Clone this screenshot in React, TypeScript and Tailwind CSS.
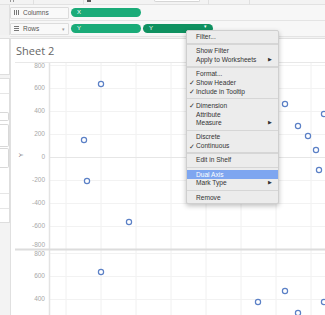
import React from "react";

const font = { fontFamily: '"Liberation Sans", Arial, sans-serif' };

type Item = { label: string; check?: boolean; arrow?: boolean; active?: boolean } | "sep";

const items: Item[] = [
  { label: "Filter..." },
  "sep",
  { label: "Show Filter" },
  { label: "Apply to Worksheets", arrow: true },
  "sep",
  { label: "Format..." },
  { label: "Show Header", check: true },
  { label: "Include in Tooltip", check: true },
  "sep",
  { label: "Dimension", check: true },
  { label: "Attribute" },
  { label: "Measure", arrow: true },
  "sep",
  { label: "Discrete" },
  { label: "Continuous", check: true },
  "sep",
  { label: "Edit in Shelf" },
  "sep",
  { label: "Dual Axis", active: true },
  { label: "Mark Type", arrow: true },
  "sep",
  { label: "Remove" },
];

const upperLabels = [
  { t: "800", y: 66 },
  { t: "600", y: 88 },
  { t: "400", y: 111 },
  { t: "200", y: 134 },
  { t: "0", y: 157 },
  { t: "-200", y: 180 },
  { t: "-400", y: 203 },
  { t: "-600", y: 226 },
  { t: "-800", y: 245 },
];
const lowerLabels = [
  { t: "800", y: 254 },
  { t: "600", y: 276 },
  { t: "400", y: 299 },
];
const upperPts = [
  [100, 84], [83, 140], [86, 181], [128, 222], [284, 104], [323, 114],
  [297, 126], [307, 136], [315, 150], [318, 170],
];
const lowerPts = [[100, 272], [257, 302], [284, 291], [297, 313], [323, 302]];

function Chart() {
  // page origin of svg: x=14, y=63
  const ox = 14;
  const oy = 63;
  const vx = [65, 100, 135, 170, 205, 240, 275, 310];
  const upperGrid = [65, 88, 111, 134, 157, 180, 203, 226, 249];
  const lowerGrid = [253, 276, 299];
  return (
    <svg width={311} height={252} className="block" style={font}>
      {vx.map((x) => (
        <line key={x} x1={x - ox} x2={x - ox} y1={0} y2={252} stroke="#f0f0f0" strokeWidth={1} />
      ))}
      {upperGrid.map((y) => (
        <line key={"u" + y} x1={48 - ox} x2={311} y1={y - oy + 0.5} y2={y - oy + 0.5} stroke={y === 157 ? "#e6e6e6" : "#f2f2f2"} strokeWidth={1} />
      ))}
      {lowerGrid.map((y) => (
        <line key={"l" + y} x1={48 - ox} x2={311} y1={y - oy + 0.5} y2={y - oy + 0.5} stroke="#f2f2f2" strokeWidth={1} />
      ))}
      <line x1={48 - ox + 0.5} x2={48 - ox + 0.5} y1={0} y2={252} stroke="#e3e3e3" strokeWidth={1.5} />
      <line x1={0} x2={311} y1={249.5 - oy} y2={249.5 - oy} stroke="#dcdcdc" strokeWidth={2} />
      {[...upperLabels, ...lowerLabels].map((l) => (
        <text key={l.t + l.y} x={44 - ox} y={l.y - oy + 2.2} textAnchor="end" fontSize={6.5} fill="#a8a8a8">
          {l.t}
        </text>
      ))}
      <text x={0} y={0} fontSize={6} fill="#666" transform={`translate(${22 - ox},${155 - oy}) rotate(-90)`} textAnchor="middle">
        Y
      </text>
      {[...upperPts, ...lowerPts].map(([x, y], i) => (
        <circle key={i} cx={x - ox} cy={y - oy} r={2.6} fill="white" stroke="#5b80c6" strokeWidth={1.2} />
      ))}
    </svg>
  );
}

function Pill({ label, dark, arrow }: { label: string; dark?: boolean; arrow?: boolean }) {
  return (
    <div
      className={`relative flex h-[9px] w-[70px] items-center rounded-full pl-[6px] text-[6px] text-white ${dark ? "bg-[#0f9160]" : "bg-[#1aab78]"}`}
    >
      {label}
      {arrow && <span className="absolute right-[6px] top-[0px] text-[5px] leading-[5px]">▾</span>}
    </div>
  );
}

export default function App() {
  return (
    <div className="relative flex h-[315px] w-[325px] flex-col overflow-hidden bg-[#f3f3f3]" style={font}>
      {/* toolbar strip */}
      <div className="relative h-[5px] shrink-0 border-b border-[#e2e2e2] bg-[#f3f3f3]">
        <div className="absolute left-[10px] top-0 h-[2px] w-[4px] border-x border-[#999]" />
        <div className="absolute left-[33px] top-0 h-[5px] w-px bg-[#e0e0e0]" />
        <div className="absolute left-[83px] top-0 h-[5px] w-px bg-[#e0e0e0]" />
        <div className="absolute left-[87px] top-0 h-[2px] w-[4px] bg-[#555]" />
        <div className="absolute left-[154px] top-0 h-[2px] w-[46px] rounded-b-[2px] border-x border-b border-[#d6d6d6] bg-white" />
        <div className="absolute left-[208px] top-0 h-[5px] w-px bg-[#e0e0e0]" />
        <div className="absolute left-[249px] top-0 h-[5px] w-px bg-[#e0e0e0]" />
      </div>

      <div className="flex min-h-0 flex-1">
        {/* left sidebar */}
        <div className="flex w-[10px] shrink-0 flex-col">
          <div className="h-[30px] border-r border-[#e0e0e0] bg-[#f1f1f1]" />
          <div className="mt-[3px] h-[37px] border-y border-r border-[#dedede] bg-white" />
          <div className="mt-[3px] flex h-[145px] flex-col border-y border-r border-[#dedede] bg-white">
            <div className="h-[15px] border-b border-[#e6e6e6]" />
            <div className="mt-[18px] h-[9px] w-[9px] rounded-r-[2px] border-y border-r border-[#d8d8d8]" />
            <div className="mt-[3px] h-[23px] w-[9px] rounded-r-[2px] border-y border-r border-[#d8d8d8]" />
            <div className="mt-[1px] h-[20px] w-[9px] rounded-r-[2px] border-y border-r border-[#d8d8d8]" />
            <div className="mt-[25px] h-px bg-[#e6e6e6]" />
            <div className="mt-[14px] h-px bg-[#e6e6e6]" />
          </div>
        </div>

        {/* main */}
        <div className="flex min-w-0 flex-1 flex-col">
          {/* Columns shelf */}
          <div className="flex h-[16px] shrink-0 items-center border-b border-[#e4e4e4] bg-[#f7f7f7]">
            <div className="flex h-[12px] w-[59px] items-center gap-[4px] rounded-[1px] border border-[#dcdcdc] bg-[#f9f9f9] pl-[3px] text-[6.5px] text-[#555]">
              <span className="flex gap-[1px]">
                <span className="h-[5px] w-px bg-[#777]" />
                <span className="h-[5px] w-px bg-[#777]" />
                <span className="h-[5px] w-px bg-[#777]" />
              </span>
              Columns
            </div>
            <div className="ml-[2px]">
              <Pill label="X" />
            </div>
          </div>
          {/* Rows shelf */}
          <div className="flex h-[16px] shrink-0 items-center border-b border-[#e4e4e4] bg-[#f7f7f7]">
            <div className="relative flex h-[12px] w-[59px] items-center gap-[4px] rounded-[1px] border border-[#dcdcdc] bg-[#f9f9f9] pl-[3px] text-[6.5px] text-[#555]">
              <span className="flex flex-col gap-[1px]">
                <span className="h-px w-[5px] bg-[#777]" />
                <span className="h-px w-[5px] bg-[#777]" />
                <span className="h-px w-[5px] bg-[#777]" />
              </span>
              Rows
              <span className="absolute right-[3px] top-[2px] text-[5px] text-[#999]">▾</span>
            </div>
            <div className="ml-[2px] flex gap-[2px]">
              <Pill label="Y" />
              <Pill label="Y" dark arrow />
            </div>
          </div>

          {/* sheet card */}
          <div className="mt-[1px] flex min-h-0 flex-1 flex-col border-l border-t border-[#e0e0e0] bg-white pl-[4px]">
            <div className="flex h-[24px] shrink-0 items-center border-b border-[#e8e8e8] pl-[1px] pt-[1px] text-[11px] text-[#666]" style={{ fontFamily: '"Open Sans", "Liberation Sans", sans-serif' }}>
              Sheet 2
            </div>
            <Chart />
          </div>
        </div>
      </div>

      {/* context menu */}
      <div className="absolute left-[186px] top-[30px] w-[93px] rounded-[2px] border border-[#cfcfcf] bg-[#ececec] py-[1.5px] text-[6.6px] text-[#333] shadow-[0_2px_5px_rgba(0,0,0,0.25)]">
        {items.map((it, i) =>
          it === "sep" ? (
            <div key={i} className="flex h-[5.6px] items-center">
              <div className="h-[1.5px] w-full bg-[#d6d6d6]" />
            </div>
          ) : (
            <div
              key={i}
              className={`relative flex h-[8.7px] items-center pl-[9px] ${it.active ? "bg-[#7ea6f0] text-white" : ""}`}
            >
              {it.check && <span className="absolute left-[2px] text-[7px] leading-none">✓</span>}
              {it.label}
              {it.arrow && <span className="absolute right-[6px] text-[4.5px] leading-none">▶</span>}
            </div>
          )
        )}
      </div>
    </div>
  );
}
